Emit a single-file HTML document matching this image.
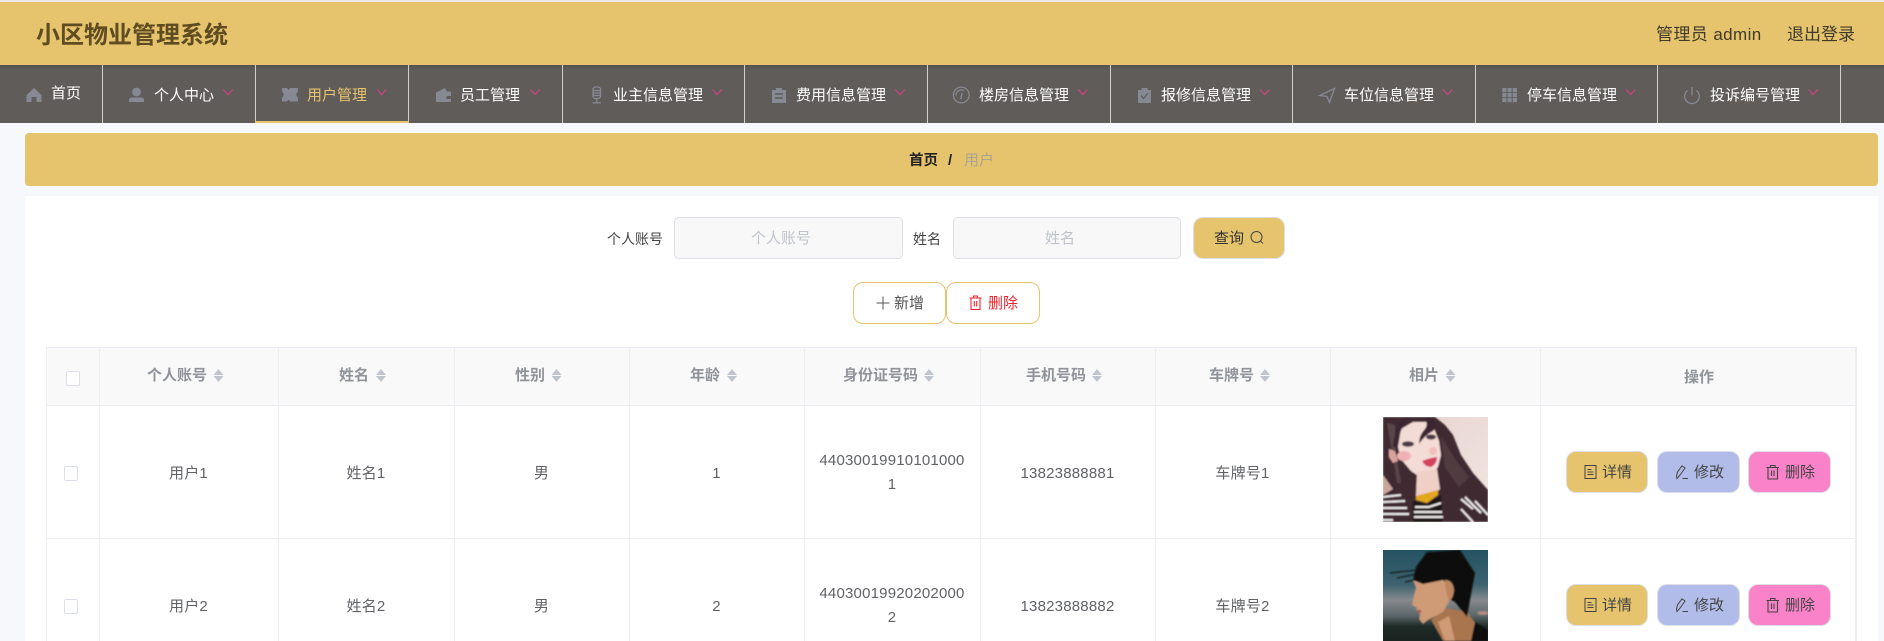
<!DOCTYPE html>
<html lang="zh"><head><meta charset="utf-8"><title>小区物业管理系统</title>
<style>
html,body{margin:0;padding:0;width:1884px;height:641px;overflow:hidden;background:#f7f8fb}
body{position:relative;font-family:"Liberation Sans","Noto Sans CJK SC",sans-serif;font-size:15px;color:#555}
div,span,svg{position:absolute;box-sizing:border-box}
.t{white-space:nowrap;line-height:20px}
.n{color:#fff;font-size:15px;top:86px}
.c{text-align:center;line-height:24px;white-space:nowrap;color:#606266;font-size:15px;letter-spacing:.2px}
.h{font-weight:700;color:#909399;font-size:15px;top:366px}
.vl{top:347px;width:1px;height:294px;background:#ebeef5}
.hl{left:46px;width:1811px;height:1px;background:#ebeef5}
.cb{width:14px;height:15px;background:#fff;border:1px solid #dcdfe6;border-radius:2px}
.d{width:1px;height:58px;top:65px;background:#cfcfcf}
.inp{background:#f8f8f8;border:1px solid #dcdfe6;border-radius:5px;top:217px;height:42px}
.btn{height:42px;border:1px solid #dcdfe6;border-radius:10px}
</style></head><body>
<div style="left:0;top:0;width:1884px;height:2px;background:#e9e9e9"></div>
<div style="left:0;top:2px;width:1884px;height:63px;background:#e6c46e"></div>
<span class="t" style="left:36px;top:21px;line-height:30px;font-size:24px;font-weight:700;color:#5f4c20">小区物业管理系统</span>
<span class="t" style="left:1656px;top:25px;font-size:17px;color:#403a2a;letter-spacing:.4px">管理员 admin</span>
<span class="t" style="left:1787px;top:25px;font-size:17px;color:#403a2a">退出登录</span>

<div style="left:0;top:65px;width:1884px;height:58px;background:linear-gradient(#54514f,#5f5c5a 5px)"></div>
<div class="d" style="left:102px"></div><div class="d" style="left:255px"></div><div class="d" style="left:408px"></div><div class="d" style="left:562px"></div><div class="d" style="left:744px"></div><div class="d" style="left:927px"></div><div class="d" style="left:1110px"></div><div class="d" style="left:1292px"></div><div class="d" style="left:1475px"></div><div class="d" style="left:1657px"></div><div class="d" style="left:1840px"></div>
<div style="left:255px;top:121px;width:154px;height:2px;background:#e6c46e"></div>

<span class="t n" style="left:51px;top:84px">首页</span>
<span class="t n" style="left:154px">个人中心</span>
<span class="t n" style="left:307px;color:#e6c46e">用户管理</span>
<span class="t n" style="left:460px">员工管理</span>
<span class="t n" style="left:613px">业主信息管理</span>
<span class="t n" style="left:796px">费用信息管理</span>
<span class="t n" style="left:979px">楼房信息管理</span>
<span class="t n" style="left:1161px">报修信息管理</span>
<span class="t n" style="left:1344px">车位信息管理</span>
<span class="t n" style="left:1527px">停车信息管理</span>
<span class="t n" style="left:1710px">投诉编号管理</span>

<div style="left:25px;top:133px;width:1853px;height:53px;background:#e6c46e;border-radius:4px"></div>
<span class="t" style="left:909px;top:151px;font-weight:700;color:#222;font-size:14.500px">首页</span>
<span class="t" style="left:948px;top:151px;font-weight:700;color:#222;font-size:15px">/</span>
<span class="t" style="left:964px;top:151px;color:#a9a48f;font-size:15px">用户</span>

<div style="left:25px;top:196px;width:1853px;height:445px;background:#fff"></div>

<span class="t" style="left:607px;top:229px;font-size:14px;color:#444">个人账号</span>
<div class="inp" style="left:674px;width:229px"></div>
<span class="t" style="left:751px;top:229px;color:#c0c4cc">个人账号</span>
<span class="t" style="left:913px;top:229px;font-size:14px;color:#444">姓名</span>
<div class="inp" style="left:953px;width:228px"></div>
<span class="t" style="left:1045px;top:229px;color:#c0c4cc">姓名</span>
<div class="btn" style="left:1193px;top:217px;width:92px;background:#e6c46e"></div>
<span class="t" style="left:1214px;top:229px;color:#333">查询</span>

<div class="btn" style="left:853px;top:282px;width:93px;background:#fff;border-color:#e6c46e"></div>
<span class="t" style="left:894px;top:294px;color:#555">新增</span>
<div class="btn" style="left:946px;top:282px;width:94px;background:#fff;border-color:#e6c46e"></div>
<span class="t" style="left:988px;top:294px;color:#f5222d">删除</span>

<div style="left:46px;top:347px;width:1811px;height:59px;background:#f9f9fa"></div>
<div class="hl" style="top:347px"></div><div class="hl" style="top:405px"></div><div class="hl" style="top:538px"></div>
<div class="vl" style="left:46px"></div><div class="vl" style="left:99px"></div><div class="vl" style="left:278px"></div><div class="vl" style="left:454px"></div><div class="vl" style="left:629px"></div><div class="vl" style="left:804px"></div><div class="vl" style="left:980px"></div><div class="vl" style="left:1155px"></div><div class="vl" style="left:1330px"></div><div class="vl" style="left:1540px"></div><div class="vl" style="left:1855px;width:2px"></div>

<div class="cb" style="left:66px;top:371px"></div>
<div class="cb" style="left:64px;top:466px"></div>
<div class="cb" style="left:64px;top:599px"></div>

<span class="t h" style="left:147px">个人账号</span>
<span class="t h" style="left:339px">姓名</span>
<span class="t h" style="left:515px">性别</span>
<span class="t h" style="left:690px">年龄</span>
<span class="t h" style="left:843px">身份证号码</span>
<span class="t h" style="left:1026px">手机号码</span>
<span class="t h" style="left:1209px">车牌号</span>
<span class="t h" style="left:1409px">相片</span>
<span class="t h" style="left:1684px;top:368px">操作</span>

<div class="c" style="left:99px;width:179px;top:462px">用户1</div>
<div class="c" style="left:278px;width:176px;top:462px">姓名1</div>
<div class="c" style="left:454px;width:175px;top:462px">男</div>
<div class="c" style="left:629px;width:175px;top:462px">1</div>
<div class="c" style="left:804px;width:176px;top:449px">44030019910101000<br>1</div>
<div class="c" style="left:980px;width:175px;top:462px">13823888881</div>
<div class="c" style="left:1155px;width:175px;top:462px">车牌号1</div>

<div class="c" style="left:99px;width:179px;top:595px">用户2</div>
<div class="c" style="left:278px;width:176px;top:595px">姓名2</div>
<div class="c" style="left:454px;width:175px;top:595px">男</div>
<div class="c" style="left:629px;width:175px;top:595px">2</div>
<div class="c" style="left:804px;width:176px;top:582px">44030019920202000<br>2</div>
<div class="c" style="left:980px;width:175px;top:595px">13823888882</div>
<div class="c" style="left:1155px;width:175px;top:595px">车牌号2</div>

<div class="btn" style="left:1566px;top:451px;width:82px;background:#e6c46e"></div>
<div class="btn" style="left:1657px;top:451px;width:83px;background:#b1bde8"></div>
<div class="btn" style="left:1748px;top:451px;width:83px;background:#fa82c9"></div>
<div class="btn" style="left:1566px;top:584px;width:82px;background:#e6c46e"></div>
<div class="btn" style="left:1657px;top:584px;width:83px;background:#b1bde8"></div>
<div class="btn" style="left:1748px;top:584px;width:83px;background:#fa82c9"></div>
<span class="t" style="left:1602px;top:463px;color:#444">详情</span>
<span class="t" style="left:1694px;top:463px;color:#444">修改</span>
<span class="t" style="left:1785px;top:463px;color:#444">删除</span>
<span class="t" style="left:1602px;top:596px;color:#444">详情</span>
<span class="t" style="left:1694px;top:596px;color:#444">修改</span>
<span class="t" style="left:1785px;top:596px;color:#444">删除</span>

<svg width="1884" height="641" viewBox="0 0 1884 641" style="left:0;top:0">
<defs>
<filter id="b" x="-5%" y="-5%" width="110%" height="110%"><feGaussianBlur stdDeviation="0.7"/></filter>
<clipPath id="cp1"><rect width="105" height="105"/></clipPath>
<clipPath id="cp2"><rect width="105" height="91"/></clipPath>
<linearGradient id="g1" x1="0" y1="0" x2="1" y2="1"><stop offset="0" stop-color="#e6d2ce"/><stop offset="1" stop-color="#f2e6e1"/></linearGradient>
<linearGradient id="g2" x1="0" y1="0" x2="0" y2="1"><stop offset="0" stop-color="#245262"/><stop offset=".38" stop-color="#3d626e"/><stop offset=".55" stop-color="#868a8e"/><stop offset=".72" stop-color="#5c666a"/><stop offset=".84" stop-color="#1d2a26"/><stop offset="1" stop-color="#1a2420"/></linearGradient>
<path id="sort" d="M0 6 5 0 10 6ZM0 7H10L5 13Z" fill="#c0c4cc"/>
<g id="doc" fill="none" stroke="#444" stroke-width="1"><rect x=".5" y=".5" width="11" height="13"/><path d="M3 4.500H7M3 7H9M3 9.500H9"/></g>
<g id="pen" fill="none" stroke="#444" stroke-width="1"><path d="M1 11 2 7 6.500 .8 9.500 3 5 9.500 1.500 13.500ZM7 13.500H12.500"/></g>
<g id="bin" fill="none" stroke="#444" stroke-width="1.100"><path d="M0 2.500H12.500M4 2.500V.5H8.500V2.500M1.500 2.500V14H11V2.500M5 5.500V11M7.500 5.500V11"/></g>
<polyline id="chev" points="0,0 4.700,5 9.400,0" fill="none" stroke="#c2457f" stroke-width="1.300"/>
</defs>

<g fill="#868893">
<path d="M34 88 26.500 95V102H31.500V97H36.500V102H41.500V95Z"/>
<circle cx="136.500" cy="92" r="4.400"/><path d="M129 102V100Q129 97.500 132 97.500H141Q144 97.500 144 100V102Z"/>
<path d="M282 88H287L288.500 90 290 88H298V91L296 94.500 298 98V101.500H290L288.500 99.500 287 101.500H282V98L284 94.500 282 91Z"/>
<path d="M436 92.500 445 88 447 91.500H451V96H446.500V99H451V102H436Z"/>
<path d="M772 90H776V88H782V90H786V103H772Z"/>
<path d="M1138 90H1141.500V88H1147.500V90H1151V103H1138Z"/>
<g><rect x="1502.300" y="88" width="4.200" height="4.200"/><rect x="1507.500" y="88" width="4.200" height="4.200"/><rect x="1512.700" y="88" width="4.200" height="4.200"/><rect x="1502.300" y="93" width="4.200" height="4.200"/><rect x="1507.500" y="93" width="4.200" height="4.200"/><rect x="1512.700" y="93" width="4.200" height="4.200"/><rect x="1502.300" y="98" width="4.200" height="4.200"/><rect x="1507.500" y="98" width="4.200" height="4.200"/><rect x="1512.700" y="98" width="4.200" height="4.200"/></g>
</g>
<path d="M775 94H783M775 98H783" stroke="#5f5c5a" stroke-width="1.400"/>
<path d="M1141 95.500 1143.500 98.500 1148 93" fill="none" stroke="#5f5c5a" stroke-width="1.200"/>
<g fill="none" stroke="#868893" stroke-width="1.300">
<rect x="593" y="87" width="7.500" height="11.500" rx="2.500"/><path d="M593 90.500H600.500M593 93H600.500M593 95.500H600.500M596.800 98.500V102.500M592.500 102.800H601"/>
<circle cx="961.300" cy="95" r="7.900"/><path d="M956 95.500A5.500 5.500 0 0 1 964 90.500M962 93 961 98M960 98.500H962"/>
<path d="M1334.500 88.500 1319.500 95.500 1327 96.500 1329.500 102.500Z"/>
<path d="M1687.500 90.500A7.300 7.300 0 1 0 1696.500 90.500M1692 87V95.500"/>
</g>
<use href="#chev" x="223.300" y="89.500"/><use href="#chev" x="377" y="89.500"/><use href="#chev" x="530.300" y="89.500"/><use href="#chev" x="712.500" y="89.500"/><use href="#chev" x="895.300" y="89.500"/><use href="#chev" x="1078" y="89.500"/><use href="#chev" x="1260" y="89.500"/><use href="#chev" x="1443" y="89.500"/><use href="#chev" x="1626" y="89.500"/><use href="#chev" x="1808.500" y="89.500"/>

<g fill="none" stroke="#444" stroke-width="1"><circle cx="1256.500" cy="237" r="5.500"/><path d="M1260.500 241 1263 243.500"/></g>
<path d="M883 296.500V309.500M876.500 303H889.500" stroke="#555" stroke-width="1"/>
<g transform="translate(969.500 295.500)" fill="none" stroke="#f5222d" stroke-width="1.100"><path d="M0 2.500H12M4 2.500V.5H8V2.500M1.500 2.500V14H10.500V2.500M4.800 5.500V11M7.200 5.500V11"/></g>

<use href="#sort" x="213.500" y="369"/><use href="#sort" x="376" y="369"/><use href="#sort" x="551.500" y="369"/><use href="#sort" x="727" y="369"/><use href="#sort" x="924" y="369"/><use href="#sort" x="1092" y="369"/><use href="#sort" x="1260" y="369"/><use href="#sort" x="1445.500" y="369"/>

<use href="#doc" x="1584.500" y="465"/><use href="#pen" x="1675.500" y="465"/><use href="#bin" x="1766.500" y="465"/>
<use href="#doc" x="1584.500" y="598"/><use href="#pen" x="1675.500" y="598"/><use href="#bin" x="1766.500" y="598"/>

<g transform="translate(1383 417)" clip-path="url(#cp1)">
<rect width="105" height="105" fill="url(#g1)"/>
<g filter="url(#b)">
<path d="M0 56 14 70 0 78Z" fill="#c9a89a"/>
<path d="M0 0H52L62 8 70 18 78 38 90 56 105 73V105H0V78L10 72 0 58Z" fill="#3f2a33"/>
<path d="M58 20 72 42 86 60 76 70 62 50Z" fill="#4f3a40"/>
<path d="M4 6 10 40 14 66 18 66 12 30 12 8Z" fill="#5a444a"/>
<path d="M18 12 30 5H48L52 14 56 24 58 38 55 50 48 60 40 62 28 54 18 42 15 30Z" fill="#f4dcd6"/>
<path d="M34 55 54 52 57 72 44 84 33 79Z" fill="#efcfc6"/>
<path d="M6 32 12 34 15 44 10 46 6 40Z" fill="#d9a49b"/>
<path d="M14 30Q16 10 28 0H22Q12 8 10 30Z" fill="#3a2530"/>
<path d="M48 0Q56 8 50 14 42 18 36 27 36 18 42 12 46 6 40 0Z" fill="#3a2530"/>
<ellipse cx="25" cy="27" rx="6" ry="2.800" fill="#4d3a48"/><ellipse cx="48" cy="20" rx="5" ry="2.600" fill="#4d3a48"/>
<ellipse cx="21" cy="39" rx="7" ry="5" fill="#efb2b4"/>
<ellipse cx="50" cy="34" rx="4" ry="4" fill="#f0c0bc"/>
<path d="M39 44Q46 41 54 40 54 47 48 50 42 50 39 44Z" fill="#d8405f"/>
<path d="M33 79 55 73V78L44 86 33 83Z" fill="#e3a61e"/>
<path d="M30 84 44 87 58 78 60 105H30Z" fill="#1f1518"/>
<g stroke="#f0ecec" stroke-width="2" fill="none">
<path d="M32 90 46 90 58 86M31 95H59M31 100H60"/>
<path d="M0 80 18 78M0 85 22 84M0 91 24 91M0 97 26 97M0 103 10 103"/>
<path d="M78 82 90 92M82 80 98 96M92 84 105 98M78 92 90 105"/>
</g>
</g></g>

<g transform="translate(1383 550)" clip-path="url(#cp2)">
<rect width="105" height="91" fill="url(#g2)"/>
<g filter="url(#b)">
<ellipse cx="100" cy="63" rx="6" ry="2" fill="#b28a80"/>
<path d="M48 70 62 58 84 62 96 78 90 91H60Z" fill="#a9744f"/>
<path d="M55 72 66 66 72 91H62Z" fill="#cf9a74"/>
<path d="M30 30 40 34 60 30 66 36 66 52 60 62 45 70 40 74 36 69 37 64 33 60 34 58 29 55 31 45 33 38Z" fill="#cf9a76"/>
<path d="M33 60 38 60 38 63 35 63Z" fill="#a85a52"/>
<path d="M30 30 33 17 44 2 77 0 92 23 87 50 84 67 72 52 68 50 68 34 60 30 40 34Z" fill="#090b08"/>
<path d="M34 20 7 23M34 24 14 28M32 30 22 32" stroke="#0c0f0d" stroke-width="1" fill="none"/>
<path d="M62 30Q70 30 71 40 70 50 66 50 62 42 62 30Z" fill="#bd8560"/>
<path d="M92 72 105 80V91H88Z" fill="#0c0d0c"/>
</g></g>
</svg>
</body></html>
